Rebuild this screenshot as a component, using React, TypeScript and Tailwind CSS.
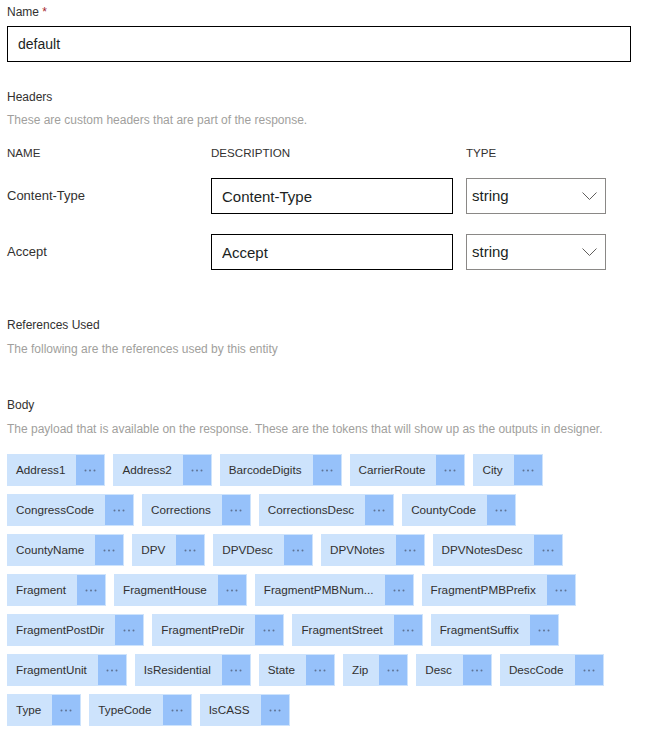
import React from 'react';

const tokens = [
  'Address1', 'Address2', 'BarcodeDigits', 'CarrierRoute', 'City',
  'CongressCode', 'Corrections', 'CorrectionsDesc', 'CountyCode',
  'CountyName', 'DPV', 'DPVDesc', 'DPVNotes', 'DPVNotesDesc',
  'Fragment', 'FragmentHouse', 'FragmentPMBNum...', 'FragmentPMBPrefix',
  'FragmentPostDir', 'FragmentPreDir', 'FragmentStreet', 'FragmentSuffix',
  'FragmentUnit', 'IsResidential', 'State', 'Zip', 'Desc', 'DescCode',
  'Type', 'TypeCode', 'IsCASS',
];

const headers = [
  { name: 'Content-Type', description: 'Content-Type', type: 'string' },
  { name: 'Accept', description: 'Accept', type: 'string' },
];

const Chevron = () => (
  <svg width="15" height="8" viewBox="0 0 15 8" fill="none" className="shrink-0">
    <path d="M0.5 0.5 L7.5 7.5 L14.5 0.5" stroke="#605e5c" strokeWidth="1" />
  </svg>
);

const Dots = () => (
  <svg width="12" height="3" viewBox="0 0 12 3">
    <circle cx="1.5" cy="1.5" r="1" fill="#5f7394" />
    <circle cx="6" cy="1.5" r="1" fill="#5f7394" />
    <circle cx="10.5" cy="1.5" r="1" fill="#5f7394" />
  </svg>
);

const Token: React.FC<{ label: string }> = ({ label }) => (
  <div className="flex h-[32px] items-stretch bg-[#cde3fc] p-px">
    <span className="flex items-center whitespace-nowrap pl-2 pr-[11px] text-[11.7px] text-[#323130]">
      {label}
    </span>
    <button className="flex w-[28px] items-center justify-center bg-[#96c1fa]">
      <Dots />
    </button>
  </div>
);

export default function App() {
  return (
    <div
      className="min-h-screen bg-white px-[7px] pt-[4px] text-[12px] leading-4 text-[#323130]"
      style={{ fontFamily: '"Segoe UI", "Liberation Sans", Arial, sans-serif' }}
    >
      <label className="block">
        Name <span className="text-[#a4262c]">*</span>
      </label>
      <input
        defaultValue="default"
        className="mt-[6px] block h-[36px] w-[624px] border border-black px-[10px] text-[14px] text-[#201f1e] outline-none"
      />

      <div className="mt-[27px]">Headers</div>
      <div className="mt-[7px] text-[#a19f9d]">These are custom headers that are part of the response.</div>

      <div className="mt-[17px] grid grid-cols-[204px_255px_140px] text-[11.6px] uppercase">
        <div>Name</div>
        <div>Description</div>
        <div>Type</div>
      </div>

      <div className="mt-[17px] flex flex-col gap-5">
        {headers.map((h) => (
          <div key={h.name} className="grid grid-cols-[204px_255px_140px] items-center">
            <div className="text-[13px]">{h.name}</div>
            <input
              defaultValue={h.description}
              className="h-[36px] w-[242px] border border-black px-[10px] text-[15px] text-[#201f1e] outline-none"
            />
            <div className="flex h-[36px] w-[140px] items-center justify-between border border-[#8a8886] pl-[5px] pr-[8px] text-[15px] text-[#201f1e]">
              <span>{h.type}</span>
              <Chevron />
            </div>
          </div>
        ))}
      </div>

      <div className="mt-[47px]">References Used</div>
      <div className="mt-[8px] text-[#a19f9d]">The following are the references used by this entity</div>

      <div className="mt-[40px]">Body</div>
      <div className="mt-[8px] text-[#a19f9d]">
        The payload that is available on the response. These are the tokens that will show up as the outputs in designer.
      </div>

      <div className="mt-[17px] flex w-[624px] flex-wrap gap-2 pb-6">
        {tokens.map((t) => (
          <Token key={t} label={t} />
        ))}
      </div>
    </div>
  );
}
